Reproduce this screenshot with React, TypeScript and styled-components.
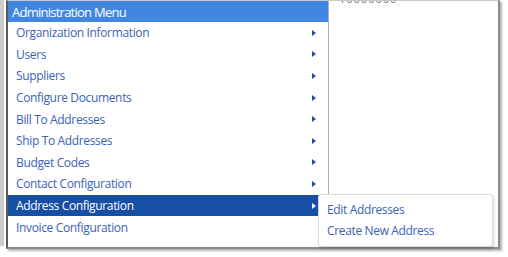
import React from 'react';
import styled, { createGlobalStyle } from 'styled-components';

const GlobalStyle = createGlobalStyle`
  html, body {
    margin: 0;
    padding: 0;
    background: #fff;
  }
  body {
    font-family: 'Open Sans', 'Liberation Sans', sans-serif;
  }
`;

const menuItems = [
  'Organization Information',
  'Users',
  'Suppliers',
  'Configure Documents',
  'Bill To Addresses',
  'Ship To Addresses',
  'Budget Codes',
  'Contact Configuration',
  'Address Configuration',
  'Invoice Configuration',
];

const subItems = ['Edit Addresses', 'Create New Address'];

const ACTIVE = 'Address Configuration';

const App = () => {
  return (
    <>
      <GlobalStyle />
      <StyledPage>
        <StyledLeftStrip />
        <StyledFrame>
          <StyledMenu>
            <StyledMenuHeader>Administration Menu</StyledMenuHeader>
            {menuItems.map((item) => {
              const active = item === ACTIVE;
              const hasArrow = item !== 'Invoice Configuration';
              return (
                <StyledMenuItem key={item} $active={active}>
                  <span>{item}</span>
                  {hasArrow && <StyledArrow $active={active} />}
                  {active && (
                    <StyledSubMenu>
                      {subItems.map((sub) => (
                        <StyledSubItem key={sub}>{sub}</StyledSubItem>
                      ))}
                    </StyledSubMenu>
                  )}
                </StyledMenuItem>
              );
            })}
          </StyledMenu>
          <StyledContent>
            <StyledClippedText>10000000</StyledClippedText>
          </StyledContent>
        </StyledFrame>
      </StyledPage>
    </>
  );
};

const StyledPage = styled.div`
  display: flex;
  width: 508px;
  height: 257px;
  background: #fff;
  overflow: hidden;
`;

const StyledLeftStrip = styled.div`
  width: 4px;
  height: 246px;
  background: #cdcdcd;
  margin-right: 2px;
`;

const StyledFrame = styled.div`
  display: flex;
  width: 490px;
  height: 246px;
  border-top: 1px solid #c8c8c8;
  border-left: 2px solid #5a5a5a;
  border-right: 2px solid #8a8a8a;
  border-bottom: 2px solid #8a8a8a;
  box-shadow: 2px 2px 2px rgba(0, 0, 0, 0.3);
  background: #fff;
`;

const StyledMenu = styled.div`
  display: flex;
  flex-direction: column;
  width: 320px;
  border-right: 1px solid #9fb2d6;
  position: relative;
`;

const StyledMenuHeader = styled.div`
  height: 21px;
  display: flex;
  align-items: center;
  padding-left: 4px;
  background: #4187e2;
  color: #fff;
  font-size: 13px;
  letter-spacing: -0.75px;
`;

const StyledMenuItem = styled.div<{ $active: boolean }>`
  position: relative;
  display: flex;
  align-items: center;
  justify-content: space-between;
  height: 21.6px;
  padding: 0 12px 0 8px;
  font-size: 12px;
  letter-spacing: -0.35px;
  color: ${({ $active }) => ($active ? '#fff' : '#3a62b8')};
  background: ${({ $active }) => ($active ? '#174fa5' : 'transparent')};
`;

const StyledArrow = styled.span<{ $active: boolean }>`
  width: 0;
  height: 0;
  border-top: 3px solid transparent;
  border-bottom: 3px solid transparent;
  border-left: 4px solid ${({ $active }) => ($active ? '#fff' : '#1d4fa8')};
`;

const StyledSubMenu = styled.div`
  position: absolute;
  left: 310px;
  top: -1px;
  width: 173px;
  padding: 4px 0 5px;
  background: #fff;
  border: 1px solid #dcdcdc;
  border-radius: 3px;
  box-shadow: 1px 2px 3px rgba(0, 0, 0, 0.18);
  z-index: 2;
  letter-spacing: -0.35px;
`;

const StyledSubItem = styled.div`
  height: 21px;
  display: flex;
  align-items: center;
  padding-left: 8px;
  font-size: 12px;
  color: #3a62b8;
`;

const StyledContent = styled.div`
  flex: 1;
  padding-left: 10px;
  overflow: hidden;
`;

const StyledClippedText = styled.div`
  margin-top: -10px;
  font-size: 11px;
  color: #6a6a7a;
  letter-spacing: 1px;
`;

export default App;
